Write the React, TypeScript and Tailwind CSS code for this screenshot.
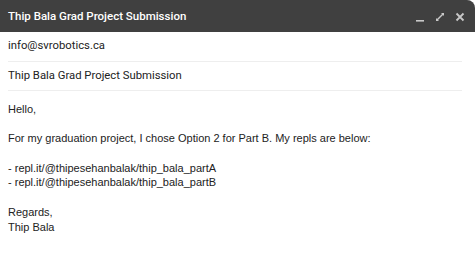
import React from "react";

export default function App() {
  return (
    <div className="w-[475px] h-[253px] bg-white overflow-hidden" style={{ fontFamily: "Roboto, 'Liberation Sans', Arial, sans-serif" }}>
      <div className="h-[32px] bg-[#404040] rounded-tr-[8px] flex items-center pl-[8px] pr-[10px]">
        <div className="text-white text-[11.5px] font-medium flex-1 pt-[1px]">Thip Bala Grad Project Submission</div>
        <div className="flex items-center gap-[10px] pt-[2px]">
          <svg width="10" height="10" viewBox="0 0 10 10">
            <rect x="1" y="8" width="8" height="1.6" fill="#c8c8c8" />
          </svg>
          <svg width="10" height="10" viewBox="0 0 10 10" fill="#c8c8c8">
            <polygon points="6,1 9,1 9,4" />
            <polygon points="1,6 1,9 4,9" />
            <line x1="8" y1="2" x2="2" y2="8" stroke="#c8c8c8" strokeWidth="1.4" />
          </svg>
          <svg width="10" height="10" viewBox="0 0 10 10">
            <path d="M1.5 1.5 L8.5 8.5 M8.5 1.5 L1.5 8.5" stroke="#c8c8c8" strokeWidth="1.8" />
          </svg>
        </div>
      </div>
      <div className="pl-[8px] pr-[13px]">
        <div className="h-[30px] border-b border-[#eeeeee] flex items-center text-[11.3px] text-[#222222]">info@svrobotics.ca</div>
        <div className="h-[29px] border-b border-[#eeeeee] flex items-center text-[11.3px] text-[#222222]">Thip Bala Grad Project Submission</div>
      </div>
      <div className="px-[8px] pt-[11px] text-[11px] leading-[14.7px] text-[#222222]" style={{ fontFamily: "'Liberation Sans', Arial, sans-serif" }}>
        <div>Hello,</div>
        <div className="h-[14.7px]" />
        <div>For my graduation project, I chose Option 2 for Part B. My repls are below:</div>
        <div className="h-[14.7px]" />
        <div>- repl.it/@thipesehanbalak/thip_bala_partA</div>
        <div>- repl.it/@thipesehanbalak/thip_bala_partB</div>
        <div className="h-[14.7px]" />
        <div>Regards,</div>
        <div>Thip Bala</div>
      </div>
    </div>
  );
}
